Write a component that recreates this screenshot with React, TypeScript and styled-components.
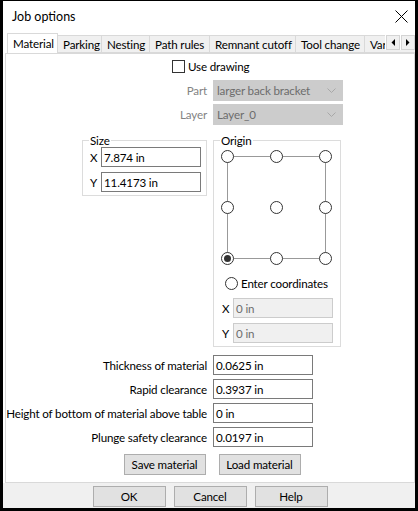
import React from "react";
import styled, { createGlobalStyle } from "styled-components";

const Global = createGlobalStyle`
  html, body { margin: 0; padding: 0; background: #000; }
  body { font-family: Lato, "Noto Sans", sans-serif; font-size: 11.6px; letter-spacing: -0.15px; line-height: 15px; color: #000; }
  * { box-sizing: border-box; }
`;

const Window = styled.div`
  width: 418px;
  height: 511px;
  background: #fff;
  border-style: solid;
  border-color: #000;
  border-width: 1px 3px 3px 3px;
  display: flex;
  flex-direction: column;
  overflow: hidden;
`;

const TitleBar = styled.div`
  height: 32px;
  flex: none;
  display: flex;
  align-items: center;
  justify-content: space-between;
  padding: 0 7px 2px 9px;
  font-size: 12.5px;
  letter-spacing: 0;
`;

const CloseBtn = styled.div`
  width: 14px;
  height: 14px;
  display: flex;
  align-items: center;
  justify-content: center;
`;

const TabStrip = styled.div`
  position: relative;
  height: 20px;
  flex: none;
  display: flex;
  align-items: flex-end;
  padding-left: 4px;
  overflow: hidden;
`;

const Tab = styled.div<{ $w: number; $active?: boolean }>`
  flex: none;
  width: ${(p) => p.$w}px;
  height: ${(p) => (p.$active ? 21 : 18)}px;
  margin-right: -1px;
  margin-bottom: ${(p) => (p.$active ? -1 : 0)}px;
  position: relative;
  z-index: ${(p) => (p.$active ? 2 : 1)};
  background: ${(p) => (p.$active ? "#fff" : "#f0f0f0")};
  border: 1px solid #d9d9d9;
  border-bottom: ${(p) => (p.$active ? "none" : "1px solid #d9d9d9")};
  display: flex;
  align-items: center;
  padding-left: 5px;
  padding-bottom: ${(p) => (p.$active ? 2 : 0)}px;
  white-space: nowrap;
  overflow: hidden;
`;

const ScrollArrows = styled.div`
  position: absolute;
  right: 0;
  top: 2px;
  display: flex;
  gap: 1px;
  z-index: 3;
  background: #fff;
  padding-left: 1px;
`;

const ArrowBtn = styled.div`
  width: 14px;
  height: 15px;
  background: #f0f0f0;
  border: 1px solid #d4d4d4;
  display: flex;
  align-items: center;
  justify-content: center;
`;

const Panel = styled.div`
  flex: 1;
  margin-left: 2px;
  border: 1px solid #d9d9d9;
  background: #fff;
  display: flex;
  flex-direction: column;
  padding-top: 6px;
`;

const CheckRow = styled.label`
  display: flex;
  align-items: center;
  height: 13px;
  padding-left: 166px;
  gap: 3px;
`;

const Checkbox = styled.span`
  width: 13px;
  height: 13px;
  border: 1px solid #333;
  background: #fff;
  flex: none;
`;

const FieldRow = styled.div<{ $mt: number }>`
  display: flex;
  align-items: center;
  gap: 6px;
  margin-top: ${(p) => p.$mt}px;
`;

const RowLabel = styled.span<{ $disabled?: boolean }>`
  width: 201px;
  flex: none;
  text-align: right;
  white-space: nowrap;
  color: ${(p) => (p.$disabled ? "#838383" : "#000")};
`;

const Combo = styled.div`
  width: 130px;
  height: 21px;
  background: #cccccc;
  border: 1px solid #cccccc;
  color: #6d6d6d;
  display: flex;
  align-items: center;
  justify-content: space-between;
  padding: 0 6px 0 3px;
`;

const TextBox = styled.div<{ $disabled?: boolean; $w?: number }>`
  width: ${(p) => p.$w ?? 100}px;
  height: 20px;
  flex: none;
  border: 1px solid ${(p) => (p.$disabled ? "#cccccc" : "#7a7a7a")};
  background: ${(p) => (p.$disabled ? "#f0f0f0" : "#fff")};
  color: ${(p) => (p.$disabled ? "#6d6d6d" : "#000")};
  display: flex;
  align-items: center;
  padding-left: 2px;
  white-space: nowrap;
`;

const GroupsRow = styled.div`
  display: flex;
  align-items: flex-start;
  margin-top: 9px;
  padding-left: 76px;
  gap: 6px;
`;

const Group = styled.fieldset<{ $w: number }>`
  width: ${(p) => p.$w}px;
  margin: 0;
  border: 1px solid #dcdcdc;
  padding: 0 5px 3px 7px;
  min-width: 0;
`;

const Legend = styled.legend`
  padding: 0 1px;
  line-height: 13px;
  height: 13px;
  margin-left: -1px;
`;

const XYRow = styled.div<{ $mt: number; $indent?: number }>`
  display: flex;
  align-items: center;
  gap: 3px;
  margin-top: ${(p) => p.$mt}px;
  padding-left: ${(p) => p.$indent ?? 0}px;
`;

const AxisLabel = styled.span`
  width: 8px;
  flex: none;
`;

const RadioGrid = styled.div`
  position: relative;
  margin-top: 3px;
  display: grid;
  grid-template-columns: repeat(3, 13px);
  grid-template-rows: repeat(3, 13px);
  column-gap: 36px;
  row-gap: 38px;
  width: max-content;
  &::before {
    content: "";
    position: absolute;
    inset: 6px;
    border: 1px solid #999;
  }
`;

const Radio = styled.span<{ $on?: boolean }>`
  position: relative;
  z-index: 1;
  width: 13px;
  height: 13px;
  border-radius: 50%;
  border: 1px solid #333;
  background: #fff;
  display: flex;
  align-items: center;
  justify-content: center;
  flex: none;
  &::after {
    content: "";
    display: ${(p) => (p.$on ? "block" : "none")};
    width: 7px;
    height: 7px;
    border-radius: 50%;
    background: #333;
  }
`;

const RadioRow = styled.div`
  display: flex;
  align-items: center;
  gap: 3px;
  margin-top: 11px;
  padding-left: 4px;
  white-space: nowrap;
`;

const BottomRows = styled.div`
  display: flex;
  flex-direction: column;
  gap: 4px;
  margin-top: 8px;
`;

const ButtonRow = styled.div`
  display: flex;
  justify-content: center;
  gap: 13px;
  margin-top: 7px;
  padding-left: 4px;
`;

const Button = styled.div<{ $w: number }>`
  width: ${(p) => p.$w}px;
  height: 21px;
  background: #e1e1e1;
  border: 1px solid #adadad;
  display: flex;
  align-items: center;
  justify-content: center;
  white-space: nowrap;
`;

const Footer = styled.div`
  height: 25px;
  flex: none;
  background: #f0f0f0;
  display: flex;
  justify-content: center;
  align-items: flex-start;
  padding-top: 3px;
  gap: 8px;
  padding-left: 2px;
`;

const Chevron = () => (
  <svg width="9" height="5" viewBox="0 0 9 5">
    <path d="M0.5 0.5 L4.5 4.5 L8.5 0.5" fill="none" stroke="#a8a8a8" strokeWidth="1" />
  </svg>
);

const tabs: [string, number][] = [
  ["Material", 51],
  ["Parking", 45],
  ["Nesting", 49],
  ["Path rules", 61],
  ["Remnant cutoff", 87],
  ["Tool change", 70],
  ["Variables", 60],
];

const fields: [string, string][] = [
  ["Thickness of material", "0.0625 in"],
  ["Rapid clearance", "0.3937 in"],
  ["Height of bottom of material above table", "0 in"],
  ["Plunge safety clearance", "0.0197 in"],
];

export default function App() {
  return (
    <>
      <Global />
      <Window>
        <TitleBar>
          <span>Job options</span>
          <CloseBtn>
            <svg width="13" height="13" viewBox="0 0 13 13">
              <path d="M0.5 0.5 L12.5 12.5 M12.5 0.5 L0.5 12.5" stroke="#000" strokeWidth="1" />
            </svg>
          </CloseBtn>
        </TitleBar>
        <TabStrip>
          {tabs.map(([t, w], i) => (
            <Tab key={t} $w={w} $active={i === 0}>
              {t}
            </Tab>
          ))}
          <ScrollArrows>
            <ArrowBtn>
              <svg width="4" height="7" viewBox="0 0 4 7">
                <path d="M4 0 L0.5 3.5 L4 7 Z" fill="#000" />
              </svg>
            </ArrowBtn>
            <ArrowBtn>
              <svg width="4" height="7" viewBox="0 0 4 7">
                <path d="M0 0 L3.5 3.5 L0 7 Z" fill="#000" />
              </svg>
            </ArrowBtn>
          </ScrollArrows>
        </TabStrip>
        <Panel>
          <CheckRow>
            <Checkbox />
            <span>Use drawing</span>
          </CheckRow>
          <FieldRow $mt={7}>
            <RowLabel $disabled>Part</RowLabel>
            <Combo>
              <span>larger back bracket</span>
              <Chevron />
            </Combo>
          </FieldRow>
          <FieldRow $mt={3}>
            <RowLabel $disabled>Layer</RowLabel>
            <Combo>
              <span>Layer_0</span>
              <Chevron />
            </Combo>
          </FieldRow>
          <GroupsRow>
            <Group $w={125}>
              <Legend>Size</Legend>
              <XYRow $mt={0}>
                <AxisLabel>X</AxisLabel>
                <TextBox>7.874 in</TextBox>
              </XYRow>
              <XYRow $mt={5}>
                <AxisLabel>Y</AxisLabel>
                <TextBox>11.4173 in</TextBox>
              </XYRow>
            </Group>
            <Group $w={128}>
              <Legend>Origin</Legend>
              <RadioGrid>
                <Radio />
                <Radio />
                <Radio />
                <Radio />
                <Radio />
                <Radio />
                <Radio $on />
                <Radio />
                <Radio />
              </RadioGrid>
              <RadioRow>
                <Radio />
                <span>Enter coordinates</span>
              </RadioRow>
              <XYRow $mt={7} $indent={1}>
                <AxisLabel>X</AxisLabel>
                <TextBox $disabled>0 in</TextBox>
              </XYRow>
              <XYRow $mt={5} $indent={1}>
                <AxisLabel>Y</AxisLabel>
                <TextBox $disabled>0 in</TextBox>
              </XYRow>
            </Group>
          </GroupsRow>
          <BottomRows>
            {fields.map(([l, v]) => (
              <FieldRow key={l} $mt={0}>
                <RowLabel>{l}</RowLabel>
                <TextBox>{v}</TextBox>
              </FieldRow>
            ))}
          </BottomRows>
          <ButtonRow>
            <Button $w={82}>Save material</Button>
            <Button $w={82}>Load material</Button>
          </ButtonRow>
        </Panel>
        <Footer>
          <Button $w={73}>OK</Button>
          <Button $w={73}>Cancel</Button>
          <Button $w={73}>Help</Button>
        </Footer>
      </Window>
    </>
  );
}
